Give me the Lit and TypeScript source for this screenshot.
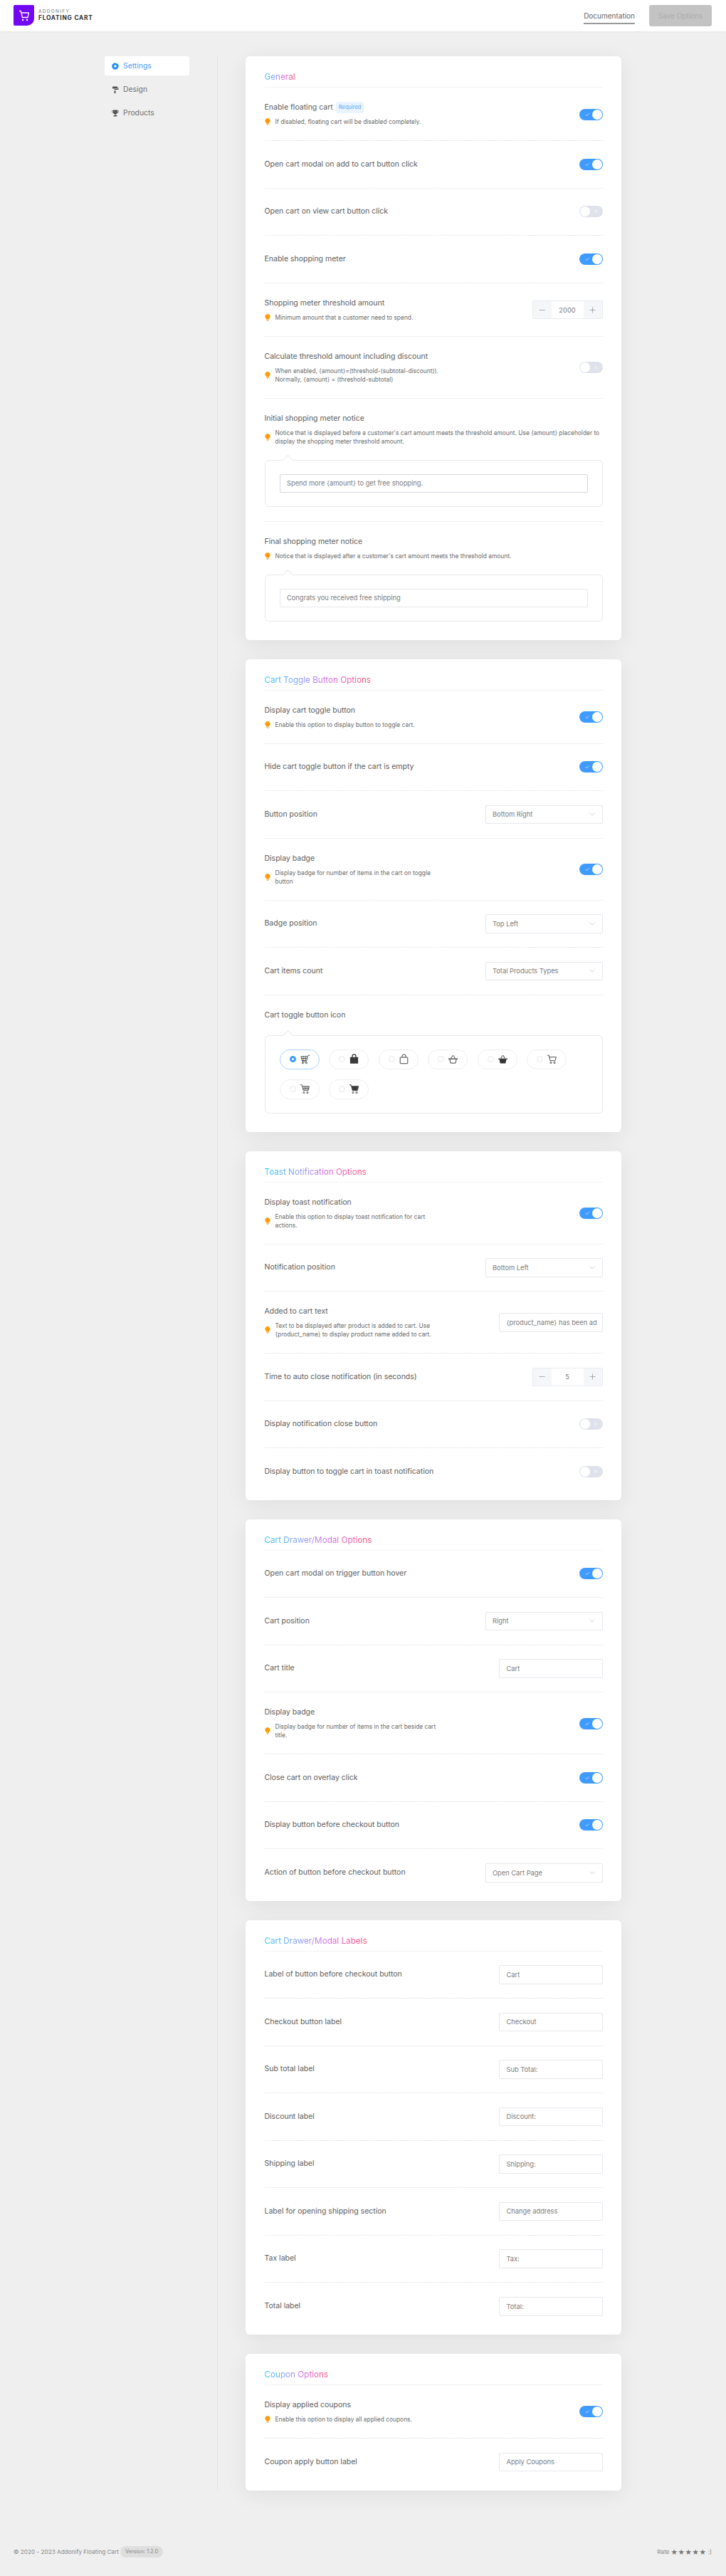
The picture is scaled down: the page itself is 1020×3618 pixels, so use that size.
import { LitElement, html, css, svg, nothing } from 'lit';
import { customElement } from 'lit/decorators.js';

type Control =
  | { kind: 'toggle'; on: boolean }
  | { kind: 'select'; value: string }
  | { kind: 'text'; value: string }
  | { kind: 'stepper'; value: string };

interface Row {
  label: string;
  note?: string[];
  badge?: string;
  control?: Control;
  panel?: 'input' | 'icons';
  value?: string;
  strong?: boolean;
}

interface Section {
  title: string;
  rows: Row[];
}

const on: Control = { kind: 'toggle', on: true };
const off: Control = { kind: 'toggle', on: false };
const select = (value: string): Control => ({ kind: 'select', value });
const text = (value: string): Control => ({ kind: 'text', value });
const stepper = (value: string): Control => ({ kind: 'stepper', value });

const SECTIONS: Section[] = [
  {
    title: 'General',
    rows: [
      { label: 'Enable floating cart', badge: 'Required', note: ['If disabled, floating cart will be disabled completely.'], control: on },
      { label: 'Open cart modal on add to cart button click', control: on },
      { label: 'Open cart on view cart button click', control: off },
      { label: 'Enable shopping meter', control: on },
      { label: 'Shopping meter threshold amount', note: ['Minimum amount that a customer need to spend.'], control: stepper('2000') },
      {
        label: 'Calculate threshold amount including discount',
        note: ['When enabled, {amount}=(threshold-(subtotal-discount)).', 'Normally, {amount} = (threshold-subtotal)'],
        control: off,
      },
      {
        label: 'Initial shopping meter notice',
        note: ["Notice that is displayed before a customer's cart amount meets the threshold amount. Use {amount} placeholder to display the shopping meter threshold amount."],
        panel: 'input',
        value: 'Spend more {amount} to get free shopping.',
        strong: true,
      },
      {
        label: 'Final shopping meter notice',
        note: ["Notice that is displayed after a customer's cart amount meets the threshold amount."],
        panel: 'input',
        value: 'Congrats you received free shipping',
      },
    ],
  },
  {
    title: 'Cart Toggle Button Options',
    rows: [
      { label: 'Display cart toggle button', note: ['Enable this option to display button to toggle cart.'], control: on },
      { label: 'Hide cart toggle button if the cart is empty', control: on },
      { label: 'Button position', control: select('Bottom Right') },
      { label: 'Display badge', note: ['Display badge for number of items in the cart on toggle button'], control: on },
      { label: 'Badge position', control: select('Top Left') },
      { label: 'Cart items count', control: select('Total Products Types') },
      { label: 'Cart toggle button icon', panel: 'icons' },
    ],
  },
  {
    title: 'Toast Notification Options',
    rows: [
      { label: 'Display toast notification', note: ['Enable this option to display toast notification for cart actions.'], control: on },
      { label: 'Notification position', control: select('Bottom Left') },
      {
        label: 'Added to cart text',
        note: ['Text to be displayed after product is added to cart. Use {product_name} to display product name added to cart.'],
        control: text('{product_name} has been ad'),
      },
      { label: 'Time to auto close notification (in seconds)', control: stepper('5') },
      { label: 'Display notification close button', control: off },
      { label: 'Display button to toggle cart in toast notification', control: off },
    ],
  },
  {
    title: 'Cart Drawer/Modal Options',
    rows: [
      { label: 'Open cart modal on trigger button hover', control: on },
      { label: 'Cart position', control: select('Right') },
      { label: 'Cart title', control: text('Cart') },
      { label: 'Display badge', note: ['Display badge for number of items in the cart beside cart title.'], control: on },
      { label: 'Close cart on overlay click', control: on },
      { label: 'Display button before checkout button', control: on },
      { label: 'Action of button before checkout button', control: select('Open Cart Page') },
    ],
  },
  {
    title: 'Cart Drawer/Modal Labels',
    rows: [
      { label: 'Label of button before checkout button', control: text('Cart') },
      { label: 'Checkout button label', control: text('Checkout') },
      { label: 'Sub total label', control: text('Sub Total:') },
      { label: 'Discount label', control: text('Discount:') },
      { label: 'Shipping label', control: text('Shipping:') },
      { label: 'Label for opening shipping section', control: text('Change address') },
      { label: 'Tax label', control: text('Tax:') },
      { label: 'Total label', control: text('Total:') },
    ],
  },
  {
    title: 'Coupon Options',
    rows: [
      { label: 'Display applied coupons', note: ['Enable this option to display all applied coupons.'], control: on },
      { label: 'Coupon apply button label', control: text('Apply Coupons') },
    ],
  },
];

const wheels = (a: number, b: number, y: number) => svg`
  <circle cx=${a} cy=${y} r="1.7" fill="none" stroke="#444" stroke-width="1.5"></circle>
  <circle cx=${b} cy=${y} r="1.7" fill="none" stroke="#444" stroke-width="1.5"></circle>`;

const CART_ICONS = [
  svg`<path d="M3 6h15l-2 9H5zM3.5 10.5h13.5M8 6v9M13 6v9M18 6l1.5-2.500H23M6 15v2.500h10" fill="none" stroke="#555" stroke-width="1.6"></path>${wheels(7, 15, 20.5)}`,
  svg`<path d="M8 8V5.500a4 4 0 0 1 8 0V8" fill="none" stroke="#333" stroke-width="2"></path><rect x="3" y="7.5" width="18" height="14.5" rx="1" fill="#3a3a3a"></rect>`,
  svg`<path d="M8 8V5.500a4 4 0 0 1 8 0V8" fill="none" stroke="#444" stroke-width="1.6"></path><rect x="3.5" y="8" width="17" height="14" rx="1" fill="none" stroke="#444" stroke-width="1.6"></rect>`,
  svg`<path d="M1.500 11.500h21" stroke="#333" stroke-width="2"></path><path d="M4.500 12l2 9h11l2-9M7.500 10l4-6.500M16.500 10l-4-6.500" fill="none" stroke="#444" stroke-width="1.6"></path>`,
  svg`<path d="M1.500 11.500h21" stroke="#333" stroke-width="2"></path><path d="M7.500 10l4-6.500M16.500 10l-4-6.500" fill="none" stroke="#333" stroke-width="1.6"></path><path d="M4 12.500h16l-2 9H6z" fill="#333"></path>`,
  svg`<path d="M1.500 3.500H5l3 12h11l2.500-8H6" fill="none" stroke="#444" stroke-width="1.5"></path>${wheels(9.5, 17.5, 20)}`,
  svg`<path d="M1.500 2.500H5l3 12.500h11.500l2-9H6M6.800 10.500H21M10 6v9M14 6v9M18 6v9" fill="none" stroke="#555" stroke-width="1.5"></path>${wheels(9.5, 17.5, 20)}`,
  svg`<path d="M1.500 2.500H5l1 3h16l-2.500 10H8.500L5 3.500z" fill="#3a3a3a" stroke="#3a3a3a" stroke-width="1"></path>${wheels(9.5, 17.5, 20)}`,
];

@customElement('app-root')
export class AppRoot extends LitElement {
  static styles = css`
    :host {
      display: block;
      min-height: 3618px;
      background: #efefef;
      font-family: 'Inter', 'Liberation Sans', sans-serif;
      color: #555;
    }

    .header {
      height: 44px;
      box-sizing: border-box;
      padding: 0 20px 0 19px;
      background: #fff;
      display: flex;
      align-items: center;
      justify-content: space-between;
      box-shadow: 0 1px 2px rgba(0, 0, 0, 0.04);
    }

    .brand {
      display: flex;
      align-items: center;
      gap: 6px;
    }

    .logo {
      width: 29px;
      height: 29px;
      margin-top: -1px;
      background: #7207f4;
      border-radius: 2px 2px 10px 2px;
      display: flex;
      align-items: center;
      justify-content: center;
    }

    .brand-text {
      display: flex;
      flex-direction: column;
      margin-top: -3px;
    }

    .brand-top {
      font-size: 6.5px;
      line-height: 8px;
      letter-spacing: 1.3px;
      color: #777;
    }

    .brand-name {
      font-size: 8.3px;
      line-height: 10px;
      font-weight: 700;
      letter-spacing: 0.8px;
      color: #2b2b2b;
    }

    .header-actions {
      display: flex;
      align-items: flex-start;
      gap: 20px;
      height: 30px;
    }

    .doc-link {
      height: 27px;
      box-sizing: border-box;
      padding-top: 8px;
      font-size: 10px;
      line-height: 14px;
      color: #666;
      border-bottom: 2px solid #999;
    }

    .save {
      width: 88px;
      height: 30px;
      border-radius: 3px;
      background: #c3c3c3;
      color: #adadad;
      font-size: 10px;
      display: flex;
      align-items: center;
      justify-content: center;
    }

    .main {
      display: flex;
      align-items: stretch;
      padding: 35px 0 0 147px;
    }

    .nav {
      width: 119px;
      margin-right: 39px;
      display: flex;
      flex-direction: column;
      gap: 6px;
    }

    .nav-item {
      height: 27px;
      display: flex;
      align-items: center;
      gap: 6px;
      padding-left: 10px;
      border-radius: 3px;
      font-size: 10.4px;
      color: #707070;
    }

    .nav-item.active {
      background: #fff;
      color: #4a9bf6;
    }

    .content {
      border-left: 1px solid #e4e4e4;
      padding-left: 39px;
      display: flex;
      flex-direction: column;
      gap: 26.5px;
    }

    .card {
      width: 528px;
      box-sizing: border-box;
      padding: 0 26.5px 6.5px;
      background: #fff;
      border-radius: 6px;
      box-shadow: 0 6px 30px rgba(0, 0, 0, 0.07);
    }

    .card-head {
      padding: 21px 0 6px;
      border-bottom: 1px solid #f3f3f3;
    }

    .card-title {
      width: fit-content;
      font-size: 11.7px;
      line-height: 16px;
      background: linear-gradient(90deg, #2cc6f2 0%, #8f9bfb 35%, #d66ae2 62%, #ff4d6d 100%);
      -webkit-background-clip: text;
      background-clip: text;
      color: transparent;
    }

    .row {
      border-bottom: 1px dotted #dedede;
    }

    .row:last-child {
      border-bottom: none;
    }

    .row-inline {
      min-height: 66.5px;
      box-sizing: border-box;
      display: flex;
      align-items: center;
      justify-content: space-between;
    }

    .row-inline.has-note {
      padding: 21px 0 20px;
    }

    .row-stack {
      padding: 21px 0 20px;
    }

    .label-line {
      display: flex;
      align-items: center;
      gap: 4px;
      height: 14px;
    }

    .label {
      font-size: 10.5px;
      line-height: 14px;
      color: #5c5c5c;
      white-space: nowrap;
    }

    .required {
      height: 16px;
      padding: 0 4px;
      background: #eaf4fe;
      border-radius: 3px;
      color: #5aa6f8;
      font-size: 7.5px;
      line-height: 16px;
    }

    .note {
      display: flex;
      align-items: center;
      gap: 7px;
      margin-top: 7px;
    }

    .note svg {
      flex: none;
      width: 8px;
      height: 10px;
    }

    .note-text {
      width: 232px;
      font-size: 8.4px;
      line-height: 12px;
      color: #6c6c6c;
    }

    .row-stack .note-text {
      width: 459px;
    }

    .toggle {
      position: relative;
      flex: none;
      width: 33px;
      height: 16px;
      box-sizing: border-box;
      border-radius: 8px;
      background: #dfe2ea;
    }

    .toggle.on {
      background: #3f9bff;
    }

    .knob {
      position: absolute;
      top: 1px;
      left: 1px;
      width: 14px;
      height: 14px;
      border-radius: 50%;
      background: #fff;
    }

    .toggle.on .knob {
      left: 18px;
    }

    .toggle svg {
      position: absolute;
      top: 5px;
      left: 20px;
      width: 6px;
      height: 6px;
    }

    .toggle.on svg {
      left: 8px;
    }

    .select,
    .input {
      box-sizing: border-box;
      height: 26.5px;
      flex: none;
      border: 1px solid #e7e8ee;
      border-radius: 2px;
      background: #fff;
      font-size: 9.3px;
      color: #7c7c7c;
      display: flex;
      align-items: center;
      padding: 0 9.5px;
      white-space: nowrap;
      overflow: hidden;
    }

    .select {
      width: 165px;
      justify-content: space-between;
    }

    .input {
      width: 145.5px;
    }

    .input.wide {
      position: relative;
      width: 100%;
      height: 26px;
    }

    .input.strong {
      border-color: #d5d6e0;
    }

    .stepper {
      flex: none;
      display: flex;
      width: 99px;
      height: 26.5px;
      box-sizing: border-box;
      border: 1px solid #e9ebf0;
      border-radius: 2px;
      background: #f5f6f9;
    }

    .step-btn {
      width: 26px;
      display: flex;
      align-items: center;
      justify-content: center;
    }

    .step-value {
      flex: 1;
      background: #fff;
      display: flex;
      align-items: center;
      justify-content: center;
      font-size: 9.3px;
      color: #7c7c7c;
    }

    .panel {
      position: relative;
      margin-top: 20px;
      padding: 19px 20px;
      border: 1px solid #e9e9e9;
      border-radius: 6px;
      background: #fff;
    }

    .panel.icons {
      margin-top: 21px;
    }

    .panel::before {
      content: '';
      position: absolute;
      top: -6px;
      left: 26px;
      width: 10px;
      height: 10px;
      background: #fff;
      border-top: 1px solid #e9e9e9;
      border-left: 1px solid #e9e9e9;
      transform: rotate(45deg);
    }

    .icon-grid {
      position: relative;
      display: flex;
      flex-wrap: wrap;
      gap: 14px 13.5px;
    }

    .pill {
      width: 56px;
      height: 28px;
      box-sizing: border-box;
      border: 1px solid #efefef;
      border-radius: 14px;
      display: flex;
      align-items: center;
      gap: 5px;
      padding-left: 13px;
    }

    .pill.selected {
      border-color: #a9d3ff;
    }

    .radio {
      width: 9px;
      height: 9px;
      box-sizing: border-box;
      border: 1px solid #e6e6e6;
      border-radius: 50%;
    }

    .pill.selected .radio {
      border: 3px solid #3f9bff;
    }

    .pill svg {
      width: 15px;
      height: 15px;
    }

    .footer {
      display: flex;
      align-items: center;
      justify-content: space-between;
      height: 16px;
      margin-top: 78px;
      padding: 0 20px 0 19px;
      font-size: 8.2px;
      color: #8a8a8a;
    }

    .footer-left,
    .rate {
      display: flex;
      align-items: center;
      gap: 2px;
    }

    .version {
      height: 16px;
      padding: 0 7px;
      border-radius: 8px;
      background: #dedede;
      font-size: 7.3px;
      line-height: 16px;
    }

    .stars {
      font-family: 'DejaVu Sans', sans-serif;
      font-size: 10.5px;
      color: #777;
      letter-spacing: 0.6px;
    }
  `;

  private renderBulb() {
    return html`<svg viewBox="0 0 8 10">
      <path d="M4 0a3.600 3.600 0 0 1 2 6.600V7.500H2V6.600A3.600 3.600 0 0 1 4 0z" fill="#ff9a0a"></path>
      <path d="M2.400 8.300h3.200M3 9.500h2" stroke="#ff9a0a" stroke-width="0.8"></path>
    </svg>`;
  }

  private renderControl(control: Control) {
    switch (control.kind) {
      case 'toggle':
        return html`<div class="toggle ${control.on ? 'on' : ''}">
          <svg viewBox="0 0 6 6">
            ${control.on
              ? svg`<path d="M0.500 3l1.700 1.700L5.500 1.300" fill="none" stroke="#cfe5ff" stroke-width="0.8"></path>`
              : svg`<path d="M1 1l4 4M5 1l-4 4" fill="none" stroke="#f3f4f7" stroke-width="1"></path>`}
          </svg>
          <div class="knob"></div>
        </div>`;
      case 'select':
        return html`<div class="select">
          <span>${control.value}</span>
          <svg width="8" height="5" viewBox="0 0 8 5"><path d="M0.500 0.700L4 4l3.500-3.300" fill="none" stroke="#c4c4c4" stroke-width="0.8"></path></svg>
        </div>`;
      case 'text':
        return html`<div class="input">${control.value}</div>`;
      case 'stepper':
        return html`<div class="stepper">
          <div class="step-btn">
            <svg width="9" height="9" viewBox="0 0 9 9"><path d="M0.500 4.500h8" stroke="#999" stroke-width="0.8"></path></svg>
          </div>
          <div class="step-value">${control.value}</div>
          <div class="step-btn">
            <svg width="9" height="9" viewBox="0 0 9 9"><path d="M0.500 4.500h8M4.500 0.500v8" stroke="#999" stroke-width="0.8"></path></svg>
          </div>
        </div>`;
    }
  }

  private renderLabel(row: Row) {
    return html`
      <div class="label-line">
        <span class="label">${row.label}</span>
        ${row.badge ? html`<span class="required">${row.badge}</span>` : nothing}
      </div>
      ${row.note
        ? html`<div class="note">
            ${this.renderBulb()}
            <div class="note-text">${row.note.map((line, i) => html`${i > 0 ? html`<br />` : nothing}${line}`)}</div>
          </div>`
        : nothing}
    `;
  }

  private renderPanel(row: Row) {
    if (row.panel === 'icons') {
      return html`<div class="panel icons">
        <div class="icon-grid">
          ${CART_ICONS.map(
            (icon, i) => html`<div class="pill ${i === 0 ? 'selected' : ''}">
              <span class="radio"></span>
              <svg viewBox="0 0 24 24">${icon}</svg>
            </div>`,
          )}
        </div>
      </div>`;
    }
    return html`<div class="panel">
      <div class="input wide ${row.strong ? 'strong' : ''}">${row.value}</div>
    </div>`;
  }

  private renderRow(row: Row) {
    if (row.panel) {
      return html`<div class="row row-stack">${this.renderLabel(row)}${this.renderPanel(row)}</div>`;
    }
    return html`<div class="row row-inline ${row.note ? 'has-note' : ''}">
      <div>${this.renderLabel(row)}</div>
      ${row.control ? this.renderControl(row.control) : nothing}
    </div>`;
  }

  render() {
    return html`
      <div class="header">
        <div class="brand">
          <div class="logo">
            <svg width="16" height="16" viewBox="0 0 16 16">
              <path d="M1 1.500h2.300L5.500 10.500h7.500L14.500 4H3.900" fill="none" stroke="#fff" stroke-width="1.3" stroke-linejoin="round"></path>
              <circle cx="6" cy="14" r="1.2" fill="#fff"></circle>
              <circle cx="12" cy="14" r="1.2" fill="#fff"></circle>
            </svg>
          </div>
          <div class="brand-text">
            <span class="brand-top">ADDONIFY</span>
            <span class="brand-name">FLOATING CART</span>
          </div>
        </div>
        <div class="header-actions">
          <div class="doc-link">Documentation</div>
          <div class="save">Save Options</div>
        </div>
      </div>

      <div class="main">
        <div class="nav">
          <div class="nav-item active">
            <svg width="10" height="10" viewBox="0 0 10 10">
              <path d="M5 0l1.100 1.200 1.700-.3.500 1.600 1.600.5-.3 1.700L10 5 8.900 6.100l.3 1.200-1.400.6-.6 1.500-1.500-.2L5 10 3.900 9.200l-1.500.2-.6-1.500-1.400-.6.3-1.200L0 5l.7-.7-.3-1.700 1.600-.5.500-1.600 1.700.3z" fill="#1b8cf4"></path>
              <circle cx="5" cy="5" r="1.8" fill="#fff"></circle>
            </svg>
            Settings
          </div>
          <div class="nav-item">
            <svg width="10" height="10" viewBox="0 0 10 10">
              <path d="M1 0.500h7v3H1zM8.500 2h1v3H5v1H4V4h4.500zM3.500 6.500h2v3.500h-2z" fill="#555"></path>
            </svg>
            Design
          </div>
          <div class="nav-item">
            <svg width="10" height="10" viewBox="0 0 10 10">
              <path d="M2 0.500h6v3a3 3 0 0 1-6 0zM4.300 6.500h1.400v1.500H7.500v1.500h-5V8h1.800z" fill="#555"></path>
              <path d="M2 1.500H0.500v1.200a1.600 1.600 0 0 0 1.700 1.600M8 1.500h1.500v1.200a1.600 1.600 0 0 1-1.700 1.600" fill="none" stroke="#555" stroke-width="0.8"></path>
            </svg>
            Products
          </div>
        </div>
        <div class="content">
          ${SECTIONS.map(
            (section) => html`<section class="card">
              <div class="card-head"><div class="card-title">${section.title}</div></div>
              ${section.rows.map((row) => this.renderRow(row))}
            </section>`,
          )}
        </div>
      </div>

      <div class="footer">
        <div class="footer-left">
          <span>© 2020 - 2023 Addonify Floating Cart</span>
          <span class="version">Version: 1.2.0</span>
        </div>
        <div class="rate">
          <span>Rate</span>
          <span class="stars">★★★★★</span>
          <span>:)</span>
        </div>
      </div>
    `;
  }
}

declare global {
  interface HTMLElementTagNameMap {
    'app-root': AppRoot;
  }
}
